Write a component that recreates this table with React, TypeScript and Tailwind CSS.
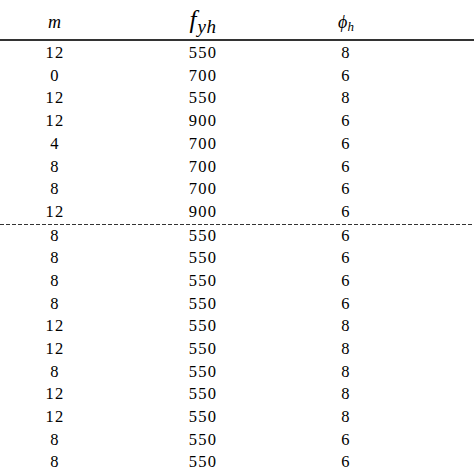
const top = [
  [12, 550, 8],
  [0, 700, 6],
  [12, 550, 8],
  [12, 900, 6],
  [4, 700, 6],
  [8, 700, 6],
  [8, 700, 6],
  [12, 900, 6],
];

const bottom = [
  [8, 550, 6],
  [8, 550, 6],
  [8, 550, 6],
  [8, 550, 6],
  [12, 550, 8],
  [12, 550, 8],
  [8, 550, 8],
  [12, 550, 8],
  [12, 550, 8],
  [8, 550, 6],
  [8, 550, 6],
];

function Row({ r }: { r: number[] }) {
  return (
    <div className="grid grid-cols-[110px_186px_100px] h-[22.7px] items-center text-center leading-none tracking-[1.2px]">
      <span>{r[0]}</span>
      <span>{r[1]}</span>
      <span>{r[2]}</span>
    </div>
  );
}

export default function App() {
  return (
    <div className="w-[474px] h-[474px] overflow-hidden bg-white text-black text-[16.5px] font-['Liberation_Serif','Times_New_Roman',serif]">
      {/* header */}
      <div className="grid grid-cols-[110px_186px_100px] h-[39px] items-center text-center leading-none">
        <span className="italic text-[18px] pt-[5px] tracking-[1px]">m</span>
        <span className="italic">
          <span className="text-[25px]">f</span>
          <span className="text-[19px] relative top-[5px] ml-[1px] tracking-[0.5px]">yh</span>
        </span>
        <span className="pt-[5px]">
          <span className="italic text-[18px]">ϕ</span>
          <span className="italic text-[13px] relative top-[3px]">h</span>
        </span>
      </div>
      <div className="h-[2px] bg-[#333]" />

      <div className="pt-[1px]">
        {top.map((r, i) => (
          <Row key={"t" + i} r={r} />
        ))}
      </div>
      <div className="h-px bg-[repeating-linear-gradient(90deg,#333_0_4px,transparent_4px_6px)]" />
      {bottom.map((r, i) => (
        <Row key={"b" + i} r={r} />
      ))}
    </div>
  );
}
